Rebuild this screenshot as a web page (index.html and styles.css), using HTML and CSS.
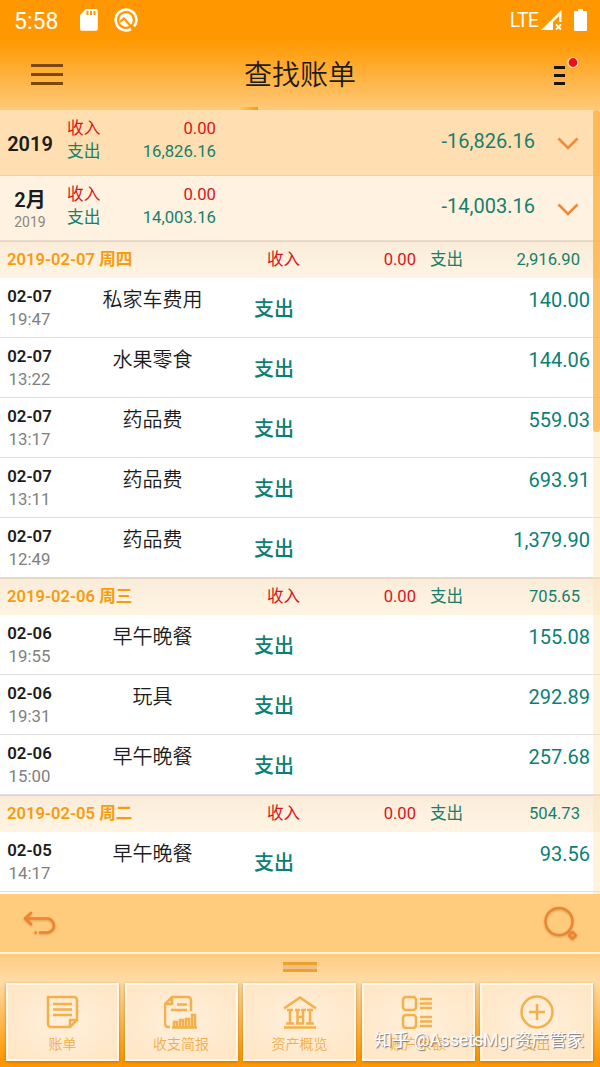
FILE: index.html
```
<!DOCTYPE html>
<html lang="zh-CN">
<head>
  <meta charset="UTF-8" />
  <title>查找账单</title>
  <link rel="stylesheet" href="styles.css">
</head>
<body>
  <div class="phone">
    <header class="header">
      <div class="status-bar">
        <span class="clock">5:58</span>
        <svg class="sd" width="18" height="22" viewBox="0 0 18 22"><path d="M6 0H16a1.800 1.800 0 0 1 1.800 1.800V20a1.800 1.800 0 0 1-1.800 1.800H2A1.800 1.800 0 0 1 0 20V6z" fill="#fff"/><path d="M7.500 2v4M11 2v4M14.500 2v4" stroke="#ff9800" stroke-width="2"/></svg>
        <svg class="round" width="24" height="24" viewBox="0 0 24 24" fill="none"><path d="M17 21a10.300 10.300 0 1 1 3-2.500" stroke="#fff" stroke-width="2.600"/><circle cx="12" cy="12" r="6.800" fill="#fff"/><path d="M6 14l4-3.500 8 9" stroke="#ff9800" stroke-width="2.200"/></svg>
        <span class="lte">LTE</span>
        <svg class="signal" width="21" height="21" viewBox="0 0 21 21"><path d="M0 20L20.500 0v12h-2.500V6l-6 6v8z" fill="#fff"/><path d="M15 14.500l5 5M20 14.500l-5 5" stroke="#fff" stroke-width="1.800"/></svg>
        <svg class="battery" width="13" height="22" viewBox="0 0 13 22"><path d="M4 0h5v2h3a1 1 0 0 1 1 1v18a1 1 0 0 1-1 1H1a1 1 0 0 1-1-1V3a1 1 0 0 1 1-1h3z" fill="#fff"/></svg>
      </div>
      <div class="title-bar">
        <svg class="menu" width="32" height="22" viewBox="0 0 32 22"><path d="M0 1.500h32M0 10.500h32M0 19.500h32" stroke="#7b4a08" stroke-width="3"/></svg>
        <h1>查找账单</h1>
        <svg class="more" width="26" height="32" viewBox="0 0 26 32"><path d="M1 11.500h11M1 19.500h11M1 27.500h11" stroke="#1c1206" stroke-width="3"/><circle cx="20" cy="6.500" r="5" fill="#f30d16" stroke="#ffe3c0" stroke-width="1.200"/></svg>
      </div>
      <div class="tab-mark"></div>
    </header>

    <main class="list">
      <section class="summary year">
        <div class="period"><b>2019</b></div>
        <div class="totals">
          <span class="in">收入</span><span class="in num">0.00</span>
          <span>支出</span><span class="num">16,826.16</span>
        </div>
        <div class="balance">-16,826.16</div>
        <svg width="22" height="14" viewBox="0 0 22 14" fill="none"><path d="M1.500 1.500l9.500 9.500 9.500-9.500" stroke="#ef8a38" stroke-width="2.600"/></svg>
      </section>
      <section class="summary month">
        <div class="period"><b>2月</b><small>2019</small></div>
        <div class="totals">
          <span class="in">收入</span><span class="in num">0.00</span>
          <span>支出</span><span class="num">14,003.16</span>
        </div>
        <div class="balance">-14,003.16</div>
        <svg width="22" height="14" viewBox="0 0 22 14" fill="none"><path d="M1.500 1.500l9.500 9.500 9.500-9.500" stroke="#ef8a38" stroke-width="2.600"/></svg>
      </section>

      <div class="day"><b>2019-02-07 周四</b><span class="in">收入</span><span class="in num">0.00</span><span class="out">支出</span><span class="num">2,916.90</span></div>
      <div class="row"><div class="when"><b>02-07</b><span>19:47</span></div><div class="name">私家车费用</div><div class="type">支出</div><div class="amount">140.00</div></div>
      <div class="row"><div class="when"><b>02-07</b><span>13:22</span></div><div class="name">水果零食</div><div class="type">支出</div><div class="amount">144.06</div></div>
      <div class="row"><div class="when"><b>02-07</b><span>13:17</span></div><div class="name">药品费</div><div class="type">支出</div><div class="amount">559.03</div></div>
      <div class="row"><div class="when"><b>02-07</b><span>13:11</span></div><div class="name">药品费</div><div class="type">支出</div><div class="amount">693.91</div></div>
      <div class="row"><div class="when"><b>02-07</b><span>12:49</span></div><div class="name">药品费</div><div class="type">支出</div><div class="amount">1,379.90</div></div>

      <div class="day"><b>2019-02-06 周三</b><span class="in">收入</span><span class="in num">0.00</span><span class="out">支出</span><span class="num">705.65</span></div>
      <div class="row"><div class="when"><b>02-06</b><span>19:55</span></div><div class="name">早午晚餐</div><div class="type">支出</div><div class="amount">155.08</div></div>
      <div class="row"><div class="when"><b>02-06</b><span>19:31</span></div><div class="name">玩具</div><div class="type">支出</div><div class="amount">292.89</div></div>
      <div class="row"><div class="when"><b>02-06</b><span>15:00</span></div><div class="name">早午晚餐</div><div class="type">支出</div><div class="amount">257.68</div></div>

      <div class="day"><b>2019-02-05 周二</b><span class="in">收入</span><span class="in num">0.00</span><span class="out">支出</span><span class="num">504.73</span></div>
      <div class="row"><div class="when"><b>02-05</b><span>14:17</span></div><div class="name">早午晚餐</div><div class="type">支出</div><div class="amount">93.56</div></div>
      <div class="scrollbar"><div class="thumb"></div></div>
    </main>

    <div class="toolbar">
      <svg class="back" width="34" height="26" viewBox="0 0 34 26" fill="none" stroke="#ed8430" stroke-width="2.600" stroke-linecap="round" stroke-linejoin="round"><path d="M8 2L2 7.500l6 5.500M2 7.500h22a7 7 0 0 1 0 14h-7M12.500 21.500h.2"/></svg>
      <svg class="search" width="36" height="36" viewBox="0 0 36 36" fill="none" stroke="#ed8430" stroke-width="2.400"><circle cx="16" cy="15.500" r="13.500"/><path d="M25.500 25l2 2"/><path d="M29.500 25.800l3.500 3.500-3.500 3.500-3.500-3.500z" fill="#f3a45a" stroke-linejoin="round"/></svg>
    </div>

    <footer class="bottom">
      <div class="handle"></div>
      <nav>
        <div class="tile">
          <svg width="34" height="34" viewBox="0 0 34 34"><path d="M2 2h26a3 3 0 0 1 3 3v20l-7 7H5a3 3 0 0 1-3-3zM31 25h-7v7M7 9h19M7 14.500h19M7 20h19"/></svg>
          <span>账单</span>
        </div>
        <div class="tile">
          <svg width="34" height="34" viewBox="0 0 34 34"><path d="M6 32H4a3 3 0 0 1-3-3V9l7-7h16a3 3 0 0 1 3 3v11M1 9h7V2M13 9.500h10M7 15h16M8 32.500h25M10 32v-5h3v5M16 32v-7h3v7M22 32V24h3v8M28 32V20h3v12"/></svg>
          <span>收支简报</span>
        </div>
        <div class="tile">
          <svg width="34" height="34" viewBox="0 0 34 34"><path d="M1 13.500L17 2.500l16 11M1 32.500h32M3 28.500h8M13 28.500h8M23 28.500h8M4 15h6M7 15v13M12 15h5M14.500 15v13M18 15h5M20 15v13M24 15h6M27 15v13M14 22h6"/></svg>
          <span>资产概览</span>
        </div>
        <div class="tile">
          <svg width="34" height="34" viewBox="0 0 34 34"><rect x="2" y="2" width="13" height="13" rx="3"/><rect x="2" y="20" width="13" height="13" rx="3"/><path d="M19 4h12M19 8.500h12M19 13h12M19 22h12M19 26.500h12M19 31h12"/></svg>
          <span>账户余额</span>
        </div>
        <div class="tile">
          <svg width="34" height="34" viewBox="0 0 34 34"><circle cx="17" cy="17" r="15.500"/><path d="M9 17h16M17 9v16"/></svg>
          <span>支出</span>
        </div>
      </nav>
      <div class="watermark">知乎 @AssetsMgr资产管家</div>
    </footer>
  </div>
</body>
</html>
```

FILE: styles.css
```
* {
  box-sizing: border-box;
}
body {
  margin: 0;
  font-family: Roboto, "Noto Sans CJK SC", sans-serif;
  color: #1c1c1c;
}
svg {
  display: block;
  flex: none;
}
.phone {
  width: 600px;
  height: 1067px;
  display: flex;
  flex-direction: column;
  overflow: hidden;
}
.header {
  height: 110px;
  flex: none;
  background: linear-gradient(#ff9800 0, #ff9800 40px, #ffca7a 110px);
}
.status-bar {
  height: 40px;
  padding: 0 13px 0 14px;
  display: flex;
  align-items: center;
  color: #fff;
}
.clock {
  width: 66px;
  font-size: 23px;
  padding-top: 2px;
}
.round {
  margin-left: 16px;
}
.lte {
  margin-left: auto;
  font-size: 19.500px;
  letter-spacing: -0.8px;
}
.signal {
  margin: 0 12px 0 3px;
}
.title-bar {
  height: 67px;
  padding: 2px 21px 0 31px;
  display: grid;
  grid-template-columns: 60px 1fr 60px;
  align-items: center;
}
h1 {
  margin: 3px 0 0;
  padding-right: 10px;
  text-align: center;
  font-size: 28px;
  font-weight: 350;
  line-height: 40px;
}
.more {
  margin-top: -6px;
  justify-self: end;
}
.tab-mark {
  width: 18px;
  height: 3px;
  margin-left: 240px;
  background: linear-gradient(90deg, #ffc670, #f79a14);
}
.list {
  height: 784px;
  flex: none;
  position: relative;
  overflow: hidden;
  background: #fff;
}
.summary {
  display: flex;
  height: 66px;
  padding-right: 21px;
  border-bottom: 1px solid #ecd2ac;
  color: #16806d;
}
.year {
  background: #ffdfb1;
}
.month {
  height: 65px;
  background: #fff2e0;
  border-color: #e9dccb;
}
.period {
  width: 60px;
  padding-top: 2px;
  display: flex;
  flex-direction: column;
  justify-content: center;
  align-items: center;
  color: #1c1c1c;
}
.period b {
  font-size: 20px;
  font-weight: 600;
  line-height: 24px;
}
.month .period {
  padding-top: 4px;
}
.period small {
  font-size: 14px;
  line-height: 21px;
  color: #8c8780;
}
.totals {
  width: 149px;
  margin: 7px 0 0 7px;
  display: grid;
  grid-template-columns: 50px 1fr;
  grid-auto-rows: 23px;
  line-height: 23px;
  font-size: 16.700px;
}
.in {
  color: #d9141c;
}
.num {
  text-align: right;
}
.balance {
  margin: 19px 22px 0 auto;
  font-size: 20px;
  line-height: 24px;
}
.month .balance {
  margin-top: 18px;
}
.summary svg {
  margin-top: 27px;
}
.day {
  height: 37px;
  display: grid;
  grid-template-columns: 260px 50px 99px 14px 50px 100px;
  padding: 0 0 0 7px;
  line-height: 36px;
  font-size: 16.600px;
  color: #16806d;
  background: linear-gradient(#faecd9, #fff4e3);
  border-top: 1px solid #e2d5c4;
}
.day b {
  font-weight: 600;
  color: #f79c10;
}
.day .out {
  grid-column: 5;
}
.row {
  height: 60px;
  display: flex;
  padding-right: 10px;
  border-bottom: 1px solid #dedede;
}
.when {
  width: 59px;
  padding-top: 7px;
  display: flex;
  flex-direction: column;
  align-items: center;
  font-size: 16.800px;
  line-height: 23px;
  color: #808080;
}
.when b {
  font-weight: 600;
  color: #1c1c1c;
}
.name {
  width: 187px;
  padding-top: 8px;
  text-align: center;
  font-size: 20px;
  line-height: 28px;
  font-weight: 350;
}
.type {
  padding: 17px 0 0 8px;
  font-size: 20px;
  line-height: 28px;
  font-weight: 500;
  color: #0b7f75;
}
.amount {
  margin-left: auto;
  padding-top: 10px;
  font-size: 20px;
  line-height: 24px;
  color: #0b7f75;
}
/* overlay scrollbar */
.scrollbar {
  position: absolute;
  top: 0;
  right: 0;
  width: 7px;
  height: 100%;
  background: rgba(255, 224, 178, 0.4);
}
.thumb {
  height: 322px;
  border-radius: 3px;
  background: rgba(255, 167, 38, 0.65);
}
.toolbar {
  height: 60px;
  flex: none;
  display: flex;
  justify-content: space-between;
  align-items: center;
  padding: 1px 21px 0 23px;
  background: #ffcb7d;
  border-bottom: 2px solid #fff0d5;
}
.toolbar svg {
  filter: drop-shadow(0 1px 1px rgba(130, 80, 10, 0.35));
}
.bottom {
  flex: 1;
  position: relative;
  background: linear-gradient(#ffcb80, #ffdca6 27px, #ff9800 105px);
}
.handle {
  width: 34px;
  height: 10px;
  margin: 8px auto 11px;
  border: solid #efa12e;
  border-width: 3px 0;
  background: #edc084;
}
nav {
  display: grid;
  grid-template-columns: repeat(5, 113px);
  gap: 5.500px;
  padding-left: 6px;
}
.tile {
  height: 78px;
  display: flex;
  flex-direction: column;
  align-items: center;
  padding-top: 10px;
  font-size: 14px;
  font-weight: 350;
  line-height: 20px;
  color: #f1ae4a;
  border: 2px solid #fff8e8;
  background: radial-gradient(#fff0dc, #ffe5c3);
  box-shadow: 0 1px 3px rgba(140, 80, 0, 0.5);
}
.tile svg {
  margin-bottom: 5px;
  fill: none;
  stroke: #f4b04b;
  stroke-width: 2.500;
}
.watermark {
  position: absolute;
  right: 16px;
  top: 73px;
  font-size: 17.500px;
  line-height: 26px;
  color: #fff;
  text-shadow: 1px 1px 1px #777;
}
```
